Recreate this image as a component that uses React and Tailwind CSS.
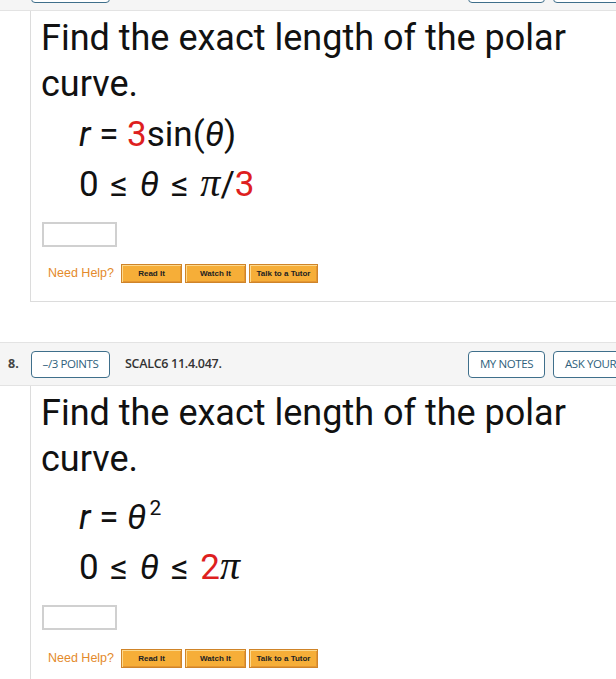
const sans = { fontFamily: 'Roboto, "Liberation Sans", sans-serif' };

function HeaderButton({ children, className = '' }) {
  return (
    <div
      className={`flex h-[27px] shrink-0 items-center rounded-[4px] border border-[#3f6f8b] bg-white text-[11.5px] tracking-[-0.4px] text-[#2f5f7c] font-['Open_Sans',sans-serif] ${className}`}
    >
      {children}
    </div>
  );
}

function QuestionHeader({ number, points, code, blank = false }) {
  return (
    <div className="flex h-[44px] w-full items-center justify-between overflow-hidden border-y border-[#e3e3e3] bg-[#f5f5f5] font-['Open_Sans',sans-serif]">
      <div className="flex items-center">
        <span className="w-[31px] pl-[8px] text-[12.5px] font-bold text-[#444]">{blank ? '' : number}</span>
        <HeaderButton className="w-[79px] justify-center">{blank ? '' : points}</HeaderButton>
        <span className="ml-[15px] text-[12.5px] font-semibold tracking-[-0.3px] text-[#333]">{blank ? '' : code}</span>
      </div>
      <div className="-mr-[72px] flex shrink-0 items-center gap-[8px]">
        <HeaderButton className="w-[77px] justify-center">{blank ? '' : 'MY NOTES'}</HeaderButton>
        <HeaderButton className="w-[135px] pl-[11px]">{blank ? '' : 'ASK YOUR TEACHER'}</HeaderButton>
      </div>
    </div>
  );
}

function HelpButton({ children, width }) {
  return (
    <div
      className={`flex h-[19px] items-center justify-center border border-[#cf8429] bg-[#f6ae38] shadow-[inset_1px_1px_0_#fcd98e,inset_-1px_-1px_0_#e39632] text-[8px] font-bold text-[#222] font-['Liberation_Sans',Arial,sans-serif] ${width}`}
    >
      {children}
    </div>
  );
}

function NeedHelp() {
  return (
    <div className="ml-[7px] flex items-center gap-[3px]">
      <span className="mr-[4px] text-[12.5px] text-[#e48a2b] font-['Liberation_Sans',Arial,sans-serif]">
        Need Help?
      </span>
      <HelpButton width="w-[61px]">Read It</HelpButton>
      <HelpButton width="w-[61px]">Watch It</HelpButton>
      <HelpButton width="w-[69px]">Talk to a Tutor</HelpButton>
    </div>
  );
}

function AnswerBox() {
  return <div className="ml-[1px] mt-[12px] h-[25px] w-[75px] border-2 border-[#d0d0d0] bg-white" />;
}

const red = 'text-[#de1f1f]';
const pi = <span className="font-['Liberation_Serif',serif] text-[40px] leading-none italic">π</span>;
const le = <span className="mx-[3px]">≤</span>;

function QuestionBody({ children, helpGap = 'mt-[17px]' }) {
  return (
    <div className="ml-[30px] border-b border-l border-[#dcdcdc] pb-[18px] pl-[10px] pt-[4px]">
      <p className="text-[36px] leading-[46px] text-[#111]" style={sans}>
        Find the exact length of the polar curve.
      </p>
      {children}
      <AnswerBox />
      <div className={helpGap}>
        <NeedHelp />
      </div>
    </div>
  );
}

export default function App() {
  return (
    <div className="h-[679px] w-[616px] overflow-hidden bg-white">
      <div className="-mt-[33px]">
        <QuestionHeader blank />
      </div>

      <QuestionBody>
        <div className="mt-[3px] pl-[38px] text-[35px] leading-[50px] text-[#111]" style={sans}>
          <div className="h-[50px]">
            <i>r</i> = <span className={red}>3</span>sin(<i>θ</i>)
          </div>
          <div className="h-[50px]">
            0 {le} <i>θ</i> {le} {pi}/<span className={red}>3</span>
          </div>
        </div>
      </QuestionBody>

      <div className="h-[40px]" />

      <QuestionHeader number="8." points="–/3 POINTS" code="SCALC6 11.4.047." />

      <QuestionBody helpGap="mt-[19px]">
        <div className="mt-[11px] pl-[38px] text-[35px] leading-[50px] text-[#111]" style={sans}>
          <div className="h-[50px]">
            <i>r</i> = <i>θ</i>
            <sup className="relative top-[5px] ml-[3px] align-top text-[21px] leading-none">2</sup>
          </div>
          <div className="h-[50px]">
            0 {le} <i>θ</i> {le} <span className={red}>2</span>{pi}
          </div>
        </div>
      </QuestionBody>
    </div>
  );
}
